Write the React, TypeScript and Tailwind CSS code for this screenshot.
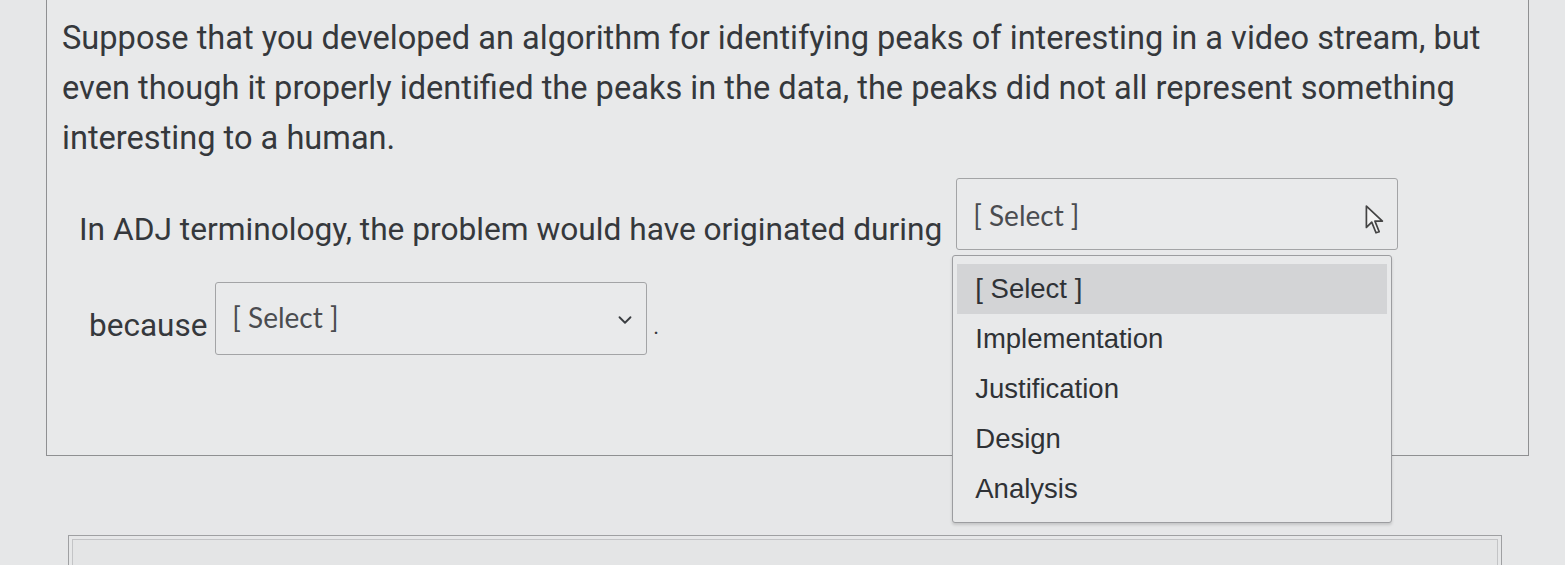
import { ChevronDown } from "lucide-react";

const OPTIONS = ["[ Select ]", "Implementation", "Justification", "Design", "Analysis"];

function Cursor() {
  return (
    <svg width="24" height="32" viewBox="0 0 22 30" className="absolute right-[10px] top-[26px]" aria-hidden>
      <path d="M2 2 L2 22 L7 17 L11 27 L14 26 L10 16 L17 16 Z" fill="#f4f4f4" stroke="#444" strokeWidth="1.6" strokeLinejoin="round" />
    </svg>
  );
}

export default function App() {
  return (
    <div className="h-[565px] w-[1565px] overflow-hidden bg-[#e6e7e8] font-['Roboto',sans-serif] text-[#35383c]">
      <div className="ml-[46px] mr-[36px] h-[456px] border border-t-0 border-[#8f9092] bg-[#e8e9ea]">
        <p className="pl-[15px] pt-[13px] text-[32.6px] leading-[50px]">
          Suppose that you developed an algorithm for identifying peaks of interesting in a video stream, but
          <br />
          even though it properly identified the peaks in the data, the peaks did not all represent something
          <br />
          interesting to a human.
        </p>

        <div className="mt-[15px] flex items-start pl-[32px]">
          <span className="mt-[32px] text-[31.7px] leading-[40px]">In ADJ terminology, the problem would have originated during</span>
          <div className="relative ml-[14px]">
            <div className="flex h-[72px] w-[442px] items-start rounded-[3px] border border-[#a3a4a6] bg-[#e9eaeb] px-[16px] pt-[20px]">
              <span className="font-['Lato',sans-serif] text-[28px] leading-[32px] text-[#4a4c50]">[ Select ]</span>
            </div>
            <Cursor />
            <ul className="absolute left-[-4px] top-[77px] z-10 w-[440px] rounded-[3px] border border-[#9c9da0] bg-[#e8e9ea] px-[4px] pb-[8px] pt-[8px] font-['Liberation_Sans',sans-serif] text-[27.5px] text-[#2f3236] shadow-[0_2px_3px_rgba(0,0,0,0.15)]">
              {OPTIONS.map((o, i) => (
                <li
                  key={o}
                  className={
                    i === 0
                      ? "flex h-[50px] items-center bg-[#d3d4d6] px-[18px] leading-[32px]"
                      : "flex h-[50px] items-center px-[18px] leading-[32px]"
                  }
                >
                  {o}
                </li>
              ))}
            </ul>
          </div>
        </div>

        <div className="mt-[32px] flex items-start pl-[42px]">
          <span className="mt-[24px] text-[31.5px] leading-[40px]">because</span>
          <div className="ml-[8px] flex h-[73px] w-[432px] items-start justify-between rounded-[3px] border border-[#a3a4a6] bg-[#e9eaeb] pl-[16px] pr-[10px] pt-[18px]">
            <span className="font-['Lato',sans-serif] text-[28px] leading-[32px] text-[#4a4c50]">[ Select ]</span>
            <ChevronDown className="mt-[8px] h-[22px] w-[22px] text-[#3a3d41]" strokeWidth={2} aria-hidden />
          </div>
          <span className="ml-[6px] mt-[28px] text-[22px]">.</span>
        </div>
      </div>

      <div className="ml-[68px] mr-[63px] mt-[79px] h-[60px] border border-[#9fa0a2] p-[3px]">
        <div className="h-full border border-[#c3c4c6] bg-[#e4e5e6]" />
      </div>
    </div>
  );
}
